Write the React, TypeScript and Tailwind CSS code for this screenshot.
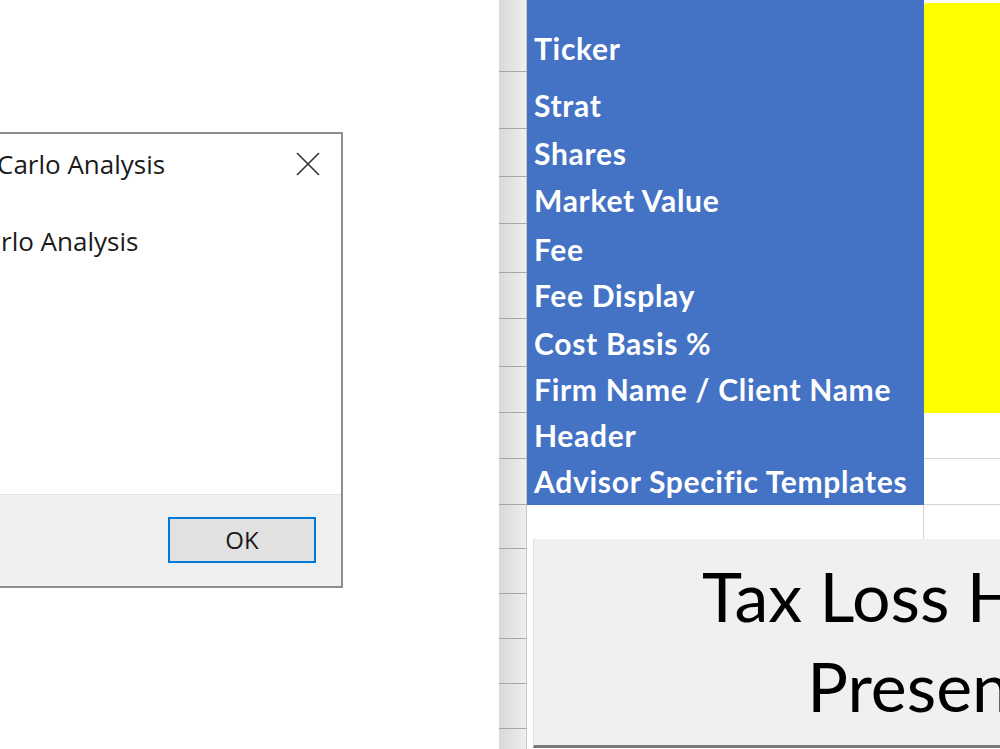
const rows = [
  { h: 72, label: "Ticker" },
  { h: 57, label: "Strat" },
  { h: 48, label: "Shares" },
  { h: 47, label: "Market Value" },
  { h: 49, label: "Fee" },
  { h: 46, label: "Fee Display" },
  { h: 48, label: "Cost Basis %" },
  { h: 46, label: "Firm Name / Client Name" },
  { h: 46, label: "Header" },
  { h: 46, label: "Advisor Specific Templates" },
];

const blankRows = [44, 45, 45, 45, 45, 45];

const calibri = { fontFamily: "Lato, 'Open Sans', sans-serif" };

function CloseIcon() {
  return (
    <svg width="24" height="24" viewBox="0 0 24 24" className="text-[#333]">
      <path d="M1 1 L23 23 M23 1 L1 23" stroke="currentColor" strokeWidth="1.6" fill="none" />
    </svg>
  );
}

function Sheet() {
  return (
    <div className="flex flex-1 flex-col">
      <div className="flex">
        {/* row headers */}
        <div className="flex w-[28px] shrink-0 flex-col">
          {rows.map((r, i) => (
            <div
              key={i}
              style={{ height: r.h }}
              className="border-b border-r border-b-[#a6a6a6] border-r-[#c6c6c6] bg-gradient-to-r from-[#d9d9d9] to-[#efefef]"
            />
          ))}
        </div>
        {/* column A: labels */}
        <div className="flex w-[397px] shrink-0 flex-col bg-[#4472c4]">
          {rows.map((r, i) => (
            <div
              key={i}
              style={{ height: r.h, ...calibri }}
              className="flex items-end pb-[9px] pl-[7px] text-[30px] font-bold leading-none text-white"
            >
              <span className="tracking-[0.7px]">{r.label}</span>
            </div>
          ))}
        </div>
        {/* column B */}
        <div className="flex flex-1 flex-col">
          <div className="mt-[3px] h-[410px] rounded-tl-[3px] bg-[#ffff00]" />
          <div className="h-[46px] border-b border-[#d4d4d4]" />
          <div className="h-[46px] border-b border-[#d4d4d4]" />
        </div>
      </div>
      <div className="flex">
        <div className="flex w-[28px] shrink-0 flex-col">
          {blankRows.map((h, i) => (
            <div
              key={i}
              style={{ height: h }}
              className="border-b border-r border-b-[#a6a6a6] border-r-[#c6c6c6] bg-gradient-to-r from-[#d9d9d9] to-[#efefef]"
            />
          ))}
        </div>
        <div className="h-[44px] w-[397px] shrink-0 border-r border-[#d4d4d4]" />
        <div className="flex-1" />
      </div>
    </div>
  );
}

export default function App() {
  return (
    <div className="relative flex h-[749px] w-[1000px] overflow-hidden bg-white">
      <div className="w-[499px] shrink-0 bg-white" />
      <Sheet />

      {/* text box shape over the sheet */}
      <div
        style={calibri}
        className="absolute left-[533px] top-[539px] flex h-[209px] w-[926px] flex-col items-center border-b-[3px] border-l border-b-[#7a7a7a] border-l-[#e0e0e0] bg-[#f0f0f0] pt-[12px] text-[68px] leading-[90px] text-black"
      >
        <div>Tax Loss Harvesting</div>
        <div>Presentation</div>
      </div>

      {/* message box */}
      <div
        style={{ fontFamily: "'Open Sans', 'Noto Sans', sans-serif" }}
        className="absolute left-[-200px] top-[132px] flex h-[456px] w-[543px] flex-col border-2 border-[#8e8e8e] bg-white text-[#1a1a1a]"
      >
        <div className="flex h-[56px] items-center justify-between pl-[195px] pr-[21px] pt-[4px]">
          <span className="text-[26px] leading-none">Carlo Analysis</span>
          <CloseIcon />
        </div>
        <div className="flex-1 pl-[199px] pt-[38px] text-[26px] leading-none">rlo Analysis</div>
        <div className="flex h-[92px] items-start justify-end border-t border-[#e3e3e3] bg-[#f0f0f0] pr-[25px] pt-[22px]">
          <button className="flex h-[46px] w-[148px] items-center justify-center border-2 border-[#0078d7] bg-[#e1e1e1] text-[24px] text-[#1a1a1a]">
            OK
          </button>
        </div>
      </div>
    </div>
  );
}
